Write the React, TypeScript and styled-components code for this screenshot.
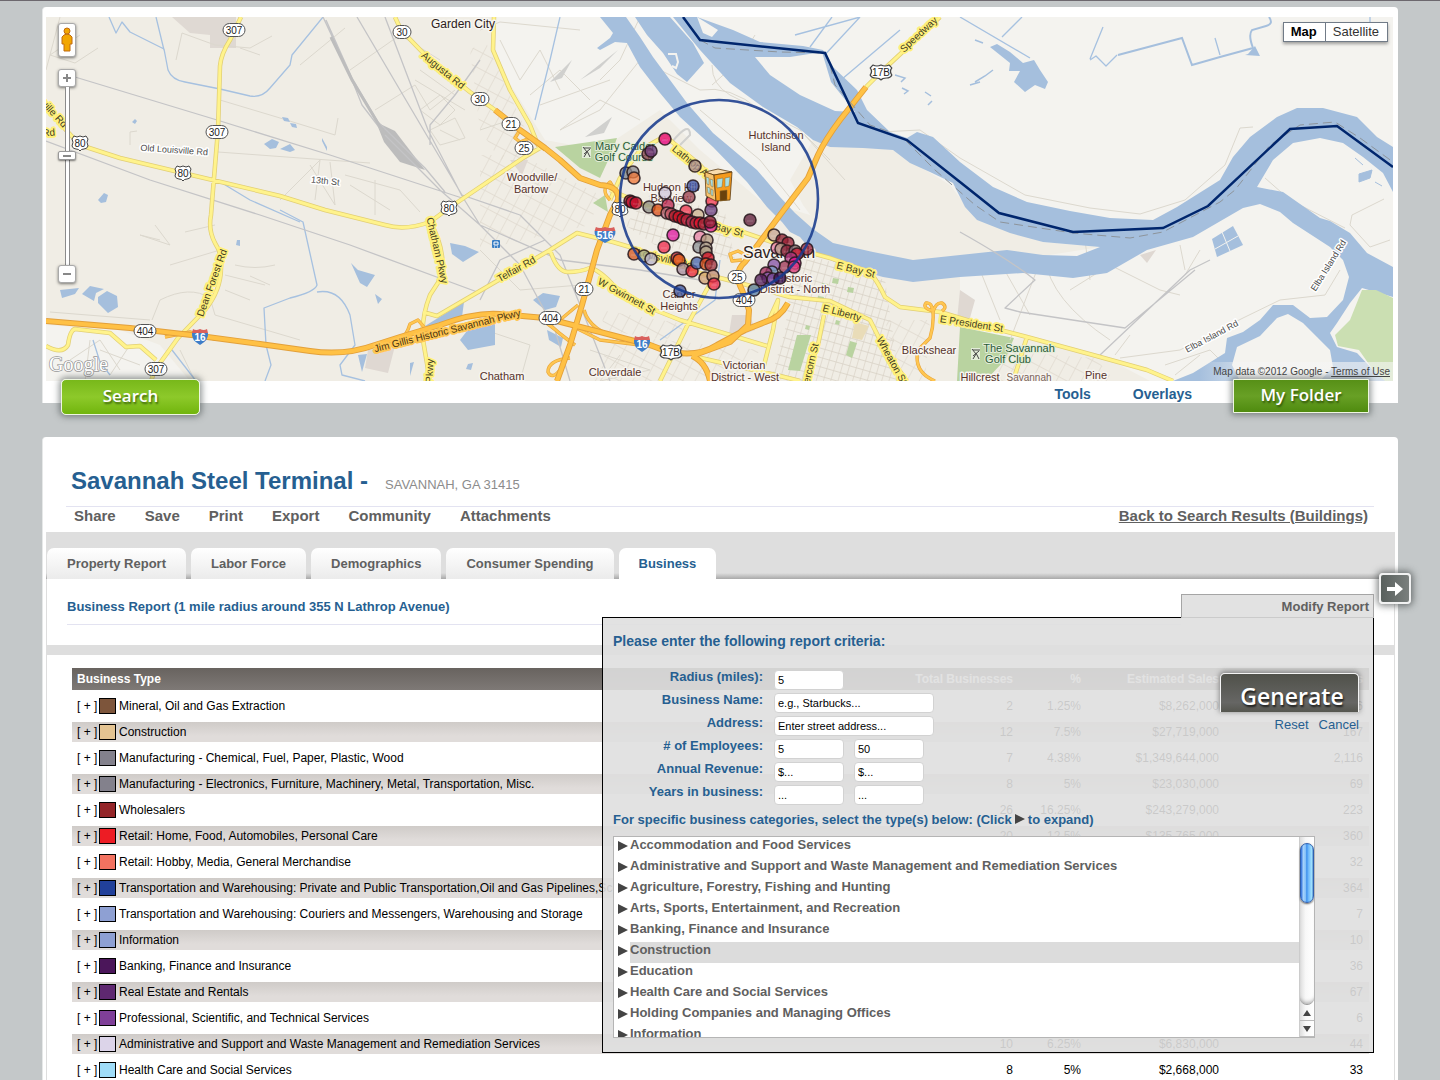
import React from "react";
import styled, { createGlobalStyle, css } from "styled-components";

const sans = `"Liberation Sans", Arial, Helvetica, sans-serif`;
const display = `"Open Sans", "Noto Sans", sans-serif`;
const blue = "#265f91";
const grey = "#606060";

const GlobalStyle = createGlobalStyle`
  * { box-sizing: border-box; }
  body { margin: 0; background: #c4c8c9; font-family: ${sans}; font-size: 12px; color: #000; }
  button, input { font-family: inherit; margin: 0; }
  a { color: inherit; text-decoration: none; }
`;

const Page = styled.div`
  min-height: 100vh;
  display: flex;
  flex-direction: column;
  gap: 34px;
  padding: 6px 42px 0;
  border-top: 1px solid #6d686e;
`;

const MapCard = styled.section`
  background: #fff;
  border-left: 1px solid #e6e8e8;
  border-radius: 4px 4px 0 0;
  padding: 10px 5px 0 3px;
`;

const MapView = styled.div`
  position: relative;
  height: 364px;
  overflow: hidden;
  background: #f0ede5;
`;

const MapSvg = styled.svg`
  display: block;
  width: 100%;
  height: 100%;
`;

const MapText = styled.text<{ $size?: number; $bold?: boolean; $serif?: boolean }>`
  font-family: ${(p) => (p.$serif ? `"Liberation Serif", "Times New Roman", serif` : sans)};
  font-size: ${(p) => p.$size || 11}px;
  font-weight: ${(p) => (p.$bold ? 700 : 400)};
  paint-order: stroke;
  stroke-linejoin: round;
`;

const Controls = styled.div`
  position: absolute;
  top: 6px;
  left: 12px;
  display: flex;
  flex-direction: column;
  align-items: center;
`;

const ControlButton = styled.button<{ $tall?: boolean }>`
  width: 18px;
  height: ${(p) => (p.$tall ? 34 : 18)}px;
  margin-bottom: ${(p) => (p.$tall ? 12 : 0)}px;
  padding: 0;
  display: flex;
  align-items: center;
  justify-content: center;
  background: #fff;
  border: 1px solid #a9a9a9;
  border-radius: 3px;
  box-shadow: 0 1px 3px rgba(0, 0, 0, 0.5);
`;

const ZoomSlider = styled.input`
  appearance: none;
  writing-mode: vertical-lr;
  direction: rtl;
  width: 18px;
  height: 178px;
  background: transparent;
  &::-webkit-slider-runnable-track {
    width: 5px;
    height: 178px;
    background: #fff;
    border: solid #8b8b8b;
    border-width: 0 1px;
  }
  &::-webkit-slider-thumb {
    appearance: none;
    width: 18px;
    height: 9px;
    margin-left: -8px;
    background: linear-gradient(#888, #888) center / 8px 2px no-repeat #fff;
    border: 1px solid #999;
    border-radius: 2px;
    box-shadow: 0 1px 2px rgba(0, 0, 0, 0.5);
  }
`;

const MapTypes = styled.div`
  position: absolute;
  top: 5px;
  right: 5px;
  display: flex;
  border: 1px solid #717b87;
  box-shadow: 0 2px 3px rgba(0, 0, 0, 0.35);
`;

const MapType = styled.button<{ $active?: boolean }>`
  height: 18px;
  padding: 0 8px 0 7px;
  border: 0;
  border-left: ${(p) => (p.$active ? "0" : "1px solid #717b87")};
  background: #fff;
  color: ${(p) => (p.$active ? "#000" : "#333")};
  font-size: 13px;
  line-height: 18px;
  font-weight: ${(p) => (p.$active ? 700 : 400)};
`;

const Attribution = styled.div`
  position: absolute;
  right: 0;
  bottom: 0;
  height: 19px;
  padding: 0 3px 0 14px;
  background: linear-gradient(to right, rgba(245, 245, 245, 0), rgba(245, 245, 245, 0.6) 50px);
  color: #444;
  font-size: 10px;
  line-height: 19px;
  a { text-decoration: underline; }
`;

const MapFooter = styled.div`
  height: 22px;
  display: flex;
  align-items: flex-start;
  padding: 0 24px 0 15px;
`;

const GreenButton = styled.button<{ $dark?: boolean }>`
  position: relative;
  flex: none;
  width: ${(p) => (p.$dark ? 136 : 139)}px;
  height: ${(p) => (p.$dark ? 34 : 36)}px;
  margin-top: -2px;
  border: 1px solid #eef7e0;
  border-radius: ${(p) => (p.$dark ? 1 : 5)}px;
  background: ${(p) =>
    p.$dark
      ? "linear-gradient(#579017, #68a025 50%, #4f8b0f)"
      : "linear-gradient(#78b81a, #8dc92a 50%, #71b50d)"};
  box-shadow: 0 0 6px 2px rgba(60, 70, 70, 0.55);
  color: #fff;
  font-family: ${display};
  font-size: 17px;
  font-weight: 600;
  line-height: 30px;
  padding: 0 0 2px;
  text-shadow: 1px 2px 2px rgba(30, 60, 0, 0.7);
`;

const FooterNav = styled.nav`
  margin-left: auto;
  display: flex;
  gap: 42px;
  margin-right: 41px;
  color: ${blue};
  font-size: 14px;
  font-weight: 700;
  line-height: 27px;
`;

const ReportCard = styled.main`
  position: relative;
  flex: 1;
  background: #fff;
  border-left: 1px solid #e6e8e8;
  border-radius: 4px 4px 0 0;
  padding: 27px 3px 0;
`;

const TitleRow = styled.header`
  display: flex;
  align-items: baseline;
  gap: 17px;
  margin: 0 21px 0 20px;
  height: 43px;
  padding-left: 5px;
  border-bottom: 1px solid #e3e3f1;
`;

const Title = styled.h1`
  margin: 0;
  color: ${blue};
  font-size: 24px;
  line-height: 34px;
`;

const City = styled.span`
  color: #8c8c8c;
  font-size: 13px;
`;

const ActionBar = styled.nav`
  display: flex;
  gap: 29px;
  height: 25px;
  padding: 0 27px 0 28px;
  color: ${grey};
  font-size: 15px;
  font-weight: 700;
  line-height: 18px;
  a:last-child { margin-left: auto; text-decoration: underline; }
`;

const Tabs = styled.div`
  display: flex;
  align-items: flex-end;
  gap: 5px;
  height: 47px;
  padding-left: 1px;
  background: linear-gradient(#dedede 41px, #a9a9a9 47px);
`;

const Tab = styled.button<{ $active?: boolean }>`
  height: 31px;
  padding: 0 20px;
  border: 0;
  border-radius: 7px 7px 0 0;
  background: ${(p) => (p.$active ? "#fff" : "linear-gradient(#fff, #ebebeb)")};
  color: ${(p) => (p.$active ? blue : grey)};
  font-size: 13px;
  font-weight: 700;
`;

const Report = styled.div`
  border: solid #dedede;
  border-width: 0 1px;
`;

const ReportHead = styled.div`
  position: relative;
  display: flex;
  justify-content: space-between;
  height: 66px;
  padding: 15px 20px 0;
`;

const ReportTitle = styled.h2`
  flex: 1;
  height: 31px;
  margin: 0;
  border-bottom: 1px solid #e3e3f1;
  color: ${blue};
  font-size: 13px;
  line-height: 25px;
`;

const ModifyTab = styled.button`
  position: relative;
  z-index: 2;
  width: 193px;
  height: 24px;
  padding: 0 4px 0 0;
  border: 1px solid #a5a5a5;
  border-bottom-color: #cbcbcb;
  background: #e2e2e2;
  color: ${grey};
  font-size: 13px;
  font-weight: 700;
  text-align: right;
`;

const Divider = styled.div`
  height: 10px;
  background: #dedede;
`;

const Table = styled.table`
  table-layout: fixed;
  width: calc(100% - 50px);
  margin: 7px 25px -6px;
  border-collapse: separate;
  border-spacing: 0 6px;
  line-height: 14px;
  white-space: nowrap;
`;

const HeadRow = styled.tr`
  height: 22px;
  background: linear-gradient(#68635f, #7e7976);
  color: #fff;
`;

const cell = css<{ $right?: boolean }>`
  padding: 0 6px 0 5px;
  text-align: ${(p) => (p.$right ? "right" : "left")};
`;
const Th = styled.th<{ $right?: boolean }>`${cell}`;
const Td = styled.td<{ $right?: boolean }>`${cell}`;
const Col = styled.col<{ $w?: number }>`
  width: ${(p) => (p.$w ? `${p.$w}px` : "auto")};
`;

const Row = styled.tr`
  height: 20px;
  &:nth-child(even) { background: linear-gradient(#cfcbc8, #e0dcda 70%); }
`;

const Category = styled.div`
  display: flex;
  align-items: center;
`;

const Expand = styled.button`
  flex: none;
  width: 22px;
  padding: 0;
  border: 0;
  background: none;
  font-size: 12px;
  line-height: 14px;
  text-align: left;
`;

const Swatch = styled.span<{ $color: string }>`
  flex: none;
  width: 17px;
  height: 16px;
  margin-right: 3px;
  border: 1px solid #000;
  background: ${(p) => p.$color};
`;

const Popup = styled.form`
  position: absolute;
  z-index: 1;
  top: 38px;
  right: 20px;
  width: 772px;
  height: 436px;
  padding: 15px 14px 0 10px;
  border: 1px solid #000;
  background: rgba(223, 223, 223, 0.9);
`;

const PopupTitle = styled.h3`
  margin: 0 0 21px;
  color: ${blue};
  font-size: 14px;
  line-height: 16px;
`;

const Criteria = styled.div`
  display: flex;
  justify-content: space-between;
`;

const Fields = styled.div`
  display: grid;
  gap: 3px;
`;

const Field = styled.div`
  display: flex;
  gap: 10px;
  height: 20px;
`;

const Label = styled.label`
  width: 150px;
  margin-right: 1px;
  color: ${blue};
  font-size: 13px;
  font-weight: 700;
  line-height: 14px;
  text-align: right;
`;

const TextBox = styled.input<{ $wide?: boolean }>`
  width: ${(p) => (p.$wide ? 160 : 70)}px;
  height: 20px;
  padding: 0 3px;
  border: 1px solid #d2d2d2;
  border-radius: 4px;
  background: #fff;
  color: #000;
  font-size: 11px;
`;

const Actions = styled.div`
  display: flex;
  flex-direction: column;
  align-items: flex-end;
  gap: 5px;
  padding-top: 3px;
  color: ${blue};
`;

const Generate = styled.button`
  width: 139px;
  height: 39px;
  padding: 5px 0 0 5px;
  border: 1px solid #f4f4f4;
  border-bottom: 0;
  border-radius: 5px 5px 0 0;
  background: linear-gradient(#50514a, #666664 75%, #55564f);
  box-shadow: 0 -1px 5px 1px rgba(60, 60, 60, 0.5);
  color: #fff;
  font-family: ${display};
  font-size: 23px;
  line-height: 28px;
  font-weight: 600;
  text-shadow: 1px 2px 2px rgba(0, 0, 0, 0.7);
`;

const ActionLinks = styled.div`
  display: flex;
  gap: 10px;
  font-size: 13px;
  line-height: 15px;
`;

const ListTitle = styled.div`
  margin: 7px 0 8px;
  color: ${blue};
  font-size: 13px;
  font-weight: 700;
  line-height: 16px;
`;

const ListBox = styled.div`
  display: flex;
  width: 702px;
  height: 202px;
  border: 1px solid #b5b5b5;
  background: #fff;
  overflow: hidden;
`;

const List = styled.ul`
  flex: 1;
  margin: 0;
  padding: 0 0 0 4px;
  list-style: none;
`;

const Item = styled.li`
  display: flex;
  height: 21px;
  color: ${grey};
  font-size: 13px;
  font-weight: 700;
  line-height: 16px;
`;

const ItemName = styled.span<{ $selected?: boolean }>`
  flex: 1;
  background: ${(p) => (p.$selected ? "#dcdcdc" : "transparent")};
`;

const Arrow = styled.svg`
  width: 12px;
  height: 12px;
  margin-top: 3px;
  fill: #444;
`;

const InlineArrow = styled.svg`
  width: 10px;
  height: 10px;
  margin: 0 3px;
  fill: #444;
`;

const Scroll = styled.div`
  display: flex;
  flex-direction: column;
  width: 15px;
  padding-top: 6px;
  border-left: 1px solid #ccc;
  background: linear-gradient(to right, #ddd, #f8f8f8 40%, #fff);
`;

const Track = styled.div`
  height: 162px;
  border-radius: 0 0 7px 7px;
  border-bottom: 1px solid #999;
  box-shadow: inset 0 -4px 4px -3px rgba(0, 0, 0, 0.35);
`;

const Thumb = styled.div`
  height: 60px;
  border: 1px solid #2f5fae;
  border-radius: 7px;
  background: linear-gradient(to right, #2b6bdc, #a5d2fb 20%, #85c0f8 38%, #3c8fec 48%, #6ab4fb 60%, #9ee0fd 88%, #5a94d2);
  box-shadow: 0 1px 2px rgba(0, 0, 0, 0.6);
`;

const Step = styled.button`
  height: 16px;
  padding: 0;
  border: 0;
  border-bottom: 1px solid #bbb;
  background: none;
  display: flex;
  align-items: center;
  justify-content: center;
`;

const NextButton = styled.button`
  position: absolute;
  top: 136px;
  right: -13px;
  width: 32px;
  height: 31px;
  padding: 0;
  display: flex;
  align-items: center;
  justify-content: center;
  border: 2px solid #f2f2f2;
  border-radius: 4px;
  background: linear-gradient(to right, #59605d, #7a7f7d);
  box-shadow: 0 0 7px 2px rgba(50, 55, 55, 0.6);
`;

/* ---------- map data ---------- */

type Label = [string, number, number, number?, number?, string?];

const places: Label[] = [
  ["Garden City", 463, 28, 0, 12, "#2c2020"],
  ["Woodville/", 532, 181], ["Bartow", 531, 193],
  ["Hutchinson", 776, 139], ["Island", 776, 151],
  ["Hudson Hill", 671, 191], ["Bayview", 671, 202],
  ["Savannah", 779, 258, 0, 16, "#2c2020"],
  ["Historic", 794, 282], ["District - North", 795, 293],
  ["Carver", 679, 298], ["Heights", 679, 310],
  ["Victorian", 744, 369], ["District - West", 745, 381],
  ["Cloverdale", 615, 376], ["Chatham", 502, 380], ["Blackshear", 929, 354],
  ["Hillcrest", 980, 381], ["Savannah", 1029, 381, 0, 10, "#7a625a"], ["Pine", 1096, 379],
];

const parks: Label[] = [
  ["Mary Calder", 625, 150], ["Golf Course", 624, 161],
  ["The Savannah", 1019, 352], ["Golf Club", 1008, 363],
];

const minor: Label[] = [
  ["Old Louisville Rd", 174, 153, 4, 9], ["13th St", 325, 184, 6, 9],
  ["Elba Island Rd", 1331, 267, -58, 9], ["Elba Island Rd", 1213, 339, -28, 9],
];

const major: Label[] = [
  ["Augusta Rd", 441, 73, 39, 10], ["Speedway", 921, 37, -43, 10],
  ["ville Rd", 52, 116, 48, 10], ["Rd", 49, 136, -5, 10],
  ["Dean Forest Rd", 215, 284, -70, 10], ["Chatham Pkwy", 434, 251, 77, 10],
  ["Pkwy", 433, 371, -88, 10], ["Telfair Rd", 518, 272, -29, 10],
  ["W Gwinnett St", 625, 299, 29, 10], ["Louisville Rd", 664, 262, 14, 10],
  ["E Bay St", 855, 273, 14, 10], ["Bay St", 728, 233, 14, 10],
  ["E Liberty", 841, 316, 15, 10], ["E President St", 971, 327, 9, 10],
  ["Wheaton St", 889, 362, 61, 10], ["ercorn St", 814, 364, -77, 10],
  ["Lathrop Av", 690, 165, 39, 10],
];

const highways: Label[] = [["Jim Gillis Historic Savannah Pkwy", 448, 334, -14, 10]];

const yellowRoads = [
  "M241 17L230 40Q221 54 220 66L218 130 213 190 211 215Q208 230 215 243 223 255 221 268 221 290 205 310L178 338 155 370 151 381",
  "M46 105L66 130 80 145 120 158 183 173 280 196 325 210 385 225Q405 231 430 222L449 208 480 187 523 158 540 148",
  "M430 222Q444 245 443 275L430 295Q421 318 423 340L430 381",
  "M423 312L437 316 550 250 577 233 613 242 640 250 700 273 740 283 790 297 830 301 870 320 885 350 907 381",
  "M550 250Q557 272 568 272 580 272 590 268 600 270 615 287L650 308 680 320 767 346",
  "M395 17L401 30 430 60 470 92 495 110",
  "M494 17L493 50 510 90 530 125 540 150",
  "M940 17L881 72 866 87",
  "M610 190L650 207 700 222 740 231 775 243 830 258 870 272Q878 282 885 297L900 307 940 312 1000 330 1027 337 1093 355 1147 370 1173 381",
  "M610 200L620 178 640 150 665 136 700 165 725 192",
  "M712 280L690 320 660 381", "M768 322L778 300 773 330 760 381",
  "M46 346Q62 355 68 345 70 330 75 329L110 333 126 347 140 346 156 360",
  "M824 315L818 345 805 381", "M1027 337L1015 375", "M692 356L780 376 800 381",
];
const orangeRoads = [
  "M46 321L130 328 200 336 260 344 310 351Q345 356 375 345L400 337 440 325Q475 312 500 314L545 318 600 332 650 345Q690 362 717 345L745 330 765 322Q780 318 788 303",
  "M557 381L570 345 582 305 597 250 610 215 618 200Q620 186 600 185L580 178 560 160 545 148 520 130 495 110",
  "M866 87L840 120Q825 140 818 155L808 178 780 215 745 262Q733 272 742 290L749 310 748 325 730 342 692 356",
  "M692 356Q706 362 710 381",
];
const thinOrange = [
  "M165 337L190 332 215 339", "M397 345Q407 335 410 324L418 320 424 327 420 338 405 341",
  "M405 341L420 341 440 331", "M545 322L575 345M560 320L600 340 640 345M578 305L560 320M584 310Q590 332 625 340M575 345Q560 335 545 320",
  "M570 358Q548 360 548 372Q552 380 560 370", "M520 130L515 138 520 142 530 138 545 150",
  "M610 200Q600 190 610 182L618 195", "M742 260L732 261 730 254 738 251 748 256",
  "M933 311Q922 308 926 303Q932 302 933 312Q934 325 930 338L918 350Q913 372 935 381M933 312Q936 302 942 303Q948 307 942 311",
];
const rails = [
  "M75 77L217 120 330 155 462 198", "M46 141L150 180 260 215 350 245 480 293",
  "M323 17L350 75 362 105 385 135 440 190 480 225 520 265 555 330 570 381", "M357 17L400 90 462 195",
  "M385 17L428 130 462 196 480 225", "M326 20L352 78 378 122 425 168 445 192",
  "M480 60L455 95 430 125 430 145", "M480 225L560 260 640 270 700 280", "M960 232Q1010 260 1035 280L1005 308 1020 312 1125 328 1195 270",
  "M1100 355L1190 270 1210 260", "M462 195L520 215 560 255 590 330 610 381", "M480 300L500 260 545 240",
];
const lanes = [
  "M60 17L46 70M80 35L50 55 75 63 98 48M176 60L182 33 215 45 250 48 272 36M240 48L260 55",
  "M220 100L280 118 335 135 338 118M218 152L300 158 370 163M130 145V132L137 131",
  "M280 200L320 160 315 200M310 165L335 205 330 162M345 175L400 190 420 212M350 185L390 210M375 180V215",
  "M350 70L400 35 440 60M375 110L415 85 430 110 455 90M300 65L345 28M420 70L455 95M430 60L470 90M415 80L465 110",
  "M420 110L440 95 455 110 440 125ZM430 130L455 118 465 138 440 145ZM440 130L460 140",
  "M160 240L140 235 170 245 155 225M185 232L215 225M170 265L220 250M235 265Q255 270 275 265M225 275L265 285",
  "M225 290L250 300M250 276L270 285M152 320L160 300Q190 285 210 298L215 315 300 340M50 312L150 320",
  "M70 360L100 340 120 370M90 340L85 381M100 350L140 365M180 350L195 381M130 345L110 375",
  "M640 17L620 60 600 80M500 40L520 80 540 50 560 90M480 30L500 22 580 30M530 95L560 70 590 100M540 105L610 80M560 130L600 100 640 120M480 130L510 120 540 150",
  "M712 85L740 60 755 35M712 65Q712 85 730 95L800 130 845 180M800 130L830 160M700 90Q730 85 760 110",
  "M850 130Q870 125 880 132L920 130 960 158 1025 195 1090 208 1140 214 1185 200 1225 165 1240 128 1253 127",
  "M640 60L700 90M700 110L760 160 800 210M640 60L600 110 560 130",
  "M1265 178L1290 200 1345 228M1384 199L1352 215 1350 225 1370 247 1390 240",
  "M980 270L1000 320M1000 262L1030 315M1040 262L1010 340M1070 290L1110 265 1160 290 1180 295M1045 258Q1050 300 1110 340M1085 240L1090 280M1180 245L1185 270M1200 250L1185 275",
  "M1120 358L1180 350 1243 318 1280 300 1325 295 1340 270M1130 335L1115 355M1165 365L1210 350 1225 365M1175 375L1200 355",
  "M480 250L520 290 580 285M485 330L530 345 520 381M590 350L650 370 600 381M620 355L600 381",
];
const creeks = [
  "M109 17L116 33 122 22 130 32 164 49 168 70Q172 80 185 82L220 89 250 96Q262 98 270 88L290 65 292 55 323 17",
  "M156 17L164 50", "M217 180L250 200 300 222M280 210L303 222 317 285Q315 292 290 298L264 308 266 345 271 365 265 381",
  "M317 292Q340 288 350 315L355 345 340 365 342 375 365 381", "M172 350L196 381", "M560 17L550 60 535 120",
  "M720 260L715 300 660 340M810 47L832 17M820 60L860 17M860 17L795 35M900 30L835 85",
  "M1090 59L1103 27M1090 60L1096 56 1106 66 1117 55M960 17L1030 58M1002 37L1022 17",
  "M1215 38L1220 55M1370 17V25", "M93 340L100 362 110 375",
];
const dots: [number, number, string][] = [
  [665, 139, "#e6007e"], [648, 154, "#8a4550"], [651, 151, "#6b3a78"], [695, 166, "#a88a90"],
  [626, 173, "#7c8592"], [633, 172, "#8d8d92"], [634, 178, "#ee7a3c"], [693, 186, "#3d55a5"],
  [689, 197, "#9e4350"], [665, 193, "#cfc6d8"], [630, 201, "#b02034"], [632, 202, "#c01030"],
  [636, 203, "#c8102e"], [649, 207, "#8f9088"], [658, 210, "#d9501e"], [668, 205, "#bb2850"],
  [686, 211, "#ee3a52"], [667, 213, "#c87a88"], [671, 214, "#c05060"], [675, 216, "#b01828"],
  [679, 217, "#d01022"], [683, 219, "#bb1020"], [687, 220, "#b52840"], [698, 215, "#cdb592"],
  [692, 222, "#a83050"], [696, 223, "#c02034"], [700, 223, "#e0102a"], [712, 201, "#ee3048"],
  [711, 210, "#6a3f80"], [704, 224, "#a02838"], [711, 226, "#e0208c"], [710, 222, "#8c1c30"],
  [673, 235, "#e01ca0"], [664, 247, "#ee3050"], [700, 237, "#e884a8"], [707, 240, "#b59b82"],
  [699, 247, "#8d9296"], [706, 248, "#b3a594"], [634, 254, "#d35a24"], [644, 256, "#a5ab8c"],
  [651, 259, "#b8b5cc"], [677, 258, "#c02630"], [679, 260, "#e4601c"], [683, 269, "#a58a9c"],
  [692, 271, "#e8283a"], [697, 263, "#4a68b0"], [706, 252, "#b0a085"], [708, 258, "#d01224"],
  [706, 264, "#dd5a20"], [711, 265, "#a03440"], [705, 278, "#d0a072"], [713, 276, "#c09078"],
  [714, 284, "#ee2c46"], [750, 220, "#60203c"], [680, 291, "#3d559c"], [774, 235, "#c9a894"],
  [782, 240, "#8c2030"], [788, 243, "#982034"], [777, 248, "#e884a8"], [781, 249, "#b59a85"],
  [787, 251, "#902840"], [795, 251, "#80707e"], [807, 249, "#98283c"], [797, 254, "#d01830"],
  [791, 258, "#b03880"], [785, 267, "#a03858"], [795, 263, "#e60a90"], [794, 267, "#d83878"],
  [774, 265, "#8655a8"], [772, 272, "#7a9cc4"], [766, 273, "#a03060"], [768, 278, "#8a5cae"],
  [761, 280, "#54205c"], [773, 279, "#7a4a9a"], [780, 278, "#351052"], [754, 290, "#587fa8"],
];
const stateShields: [string, number, number][] = [
  ["307", 234, 30], ["30", 402, 32], ["30", 480, 99], ["307", 217, 132], ["21", 511, 124], ["25", 524, 148],
  ["404", 145, 331], ["307", 156, 369], ["21", 584, 289], ["404", 550, 318], ["25", 737, 277], ["404", 744, 300],
];
const usShields: [string, number, number][] = [
  ["80", 80, 143], ["80", 183, 173], ["80", 449, 208], ["80", 620, 209], ["17B", 881, 72], ["17B", 671, 352],
];
const interstates: [string, number, number][] = [["16", 200, 337], ["516", 605, 235], ["16", 642, 344]];

function Labels({ items, halo, width, color }: { items: Label[]; halo: string; width: number; color: string }) {
  return (
    <>
      {items.map(([t, x, y, r = 0, s = 11, c]) => (
        <MapText key={t + x} $size={s} textAnchor="middle" fill={c || color} stroke={halo} strokeWidth={width}
          transform={`translate(${x} ${y}) rotate(${r})`}>{t}</MapText>
      ))}
    </>
  );
}

function Strokes({ d, color, w, dash }: { d: string[]; color: string; w: number; dash?: string }) {
  return <path d={d.join("")} fill="none" stroke={color} strokeWidth={w} strokeDasharray={dash} strokeLinejoin="round" />;
}

function MapDrawing() {
  return (
    <MapSvg viewBox="46 17 1347 364" preserveAspectRatio="xMidYMid slice" role="img" aria-label="Map of Savannah">
      <defs>
        <pattern id="grid" width="7" height="9" patternUnits="userSpaceOnUse" patternTransform="rotate(16)">
          <path d="M0 0H7M0 0V9" stroke="#d8d1c5" strokeWidth="1.3" />
        </pattern>
        <pattern id="blocks" width="11" height="15" patternUnits="userSpaceOnUse" patternTransform="rotate(28)">
          <path d="M0 0H11M0 0V15" stroke="#dfd9ce" strokeWidth="1.3" />
        </pattern>
      </defs>
      <rect x="46" y="17" width="1347" height="364" fill="#f0ede5" />
      <path d="M495 17L495 60 545 140 600 150 660 110 700 150 760 200 810 215 880 240 960 250 960 381H1393V17Z" fill="#f4f3ef" />
      <path d="M46 325L120 330 160 345 190 381H46Z" fill="#f4f3ef" />
      <path d="M813 140L893 150 950 185 977 220 1043 242 1100 247 1043 256 960 255 873 252 825 235 803 205 790 180Z" fill="#f0ede5" />
      <path d="M960 345L1020 338 1110 360 1150 381H960Z" fill="#f0ede5" />
      <path d="M652 192L725 213 735 260 655 245 625 225Z" fill="url(#grid)" />
      <path d="M795 250L885 280 900 381H770L785 330Z" fill="url(#grid)" />
      <path d="M480 155L520 155 600 195 590 225 480 250ZM600 310L690 325 665 340 605 330Z" fill="url(#blocks)" />
      <path d="M470 50L485 40 505 85 535 150 500 160 480 130ZM615 335L760 350 740 381H590ZM885 320L930 320 925 381H900ZM985 350L1095 358 1115 381H985Z" fill="url(#blocks)" />
      <path d="M172 17L190 33 210 35 210 48 236 48 236 17Z" fill="#dfd9d3" />
      <path d="M368 350L395 346 388 373 365 368ZM732 315L750 315 755 330 728 340ZM510 160H528L522 175ZM960 290L975 300 968 325 957 320ZM1140 255L1156 250 1147 263Z" fill="#dfd8d2" />
      <path d="M555 147L617 138 612 152 600 178 580 168ZM593 203L605 195 608 212ZM797 335L811 335 800 371 788 370ZM850 341L857 343 852 358 846 355ZM960 327L1014 338 1005 360 985 381H957Z" fill="#b9d3a0" />
      <path d="M822 283l6 1-1 5-6-1zM833 278l6 1-1 5-6-1zM818 296l6 1-1 5-6-1zM848 287l6 1-1 5-6-1zM806 325l4 1-1 4-4-1zM836 320l4 1-1 4-4-1z" fill="#b9d3a0" />
      <path d="M855 322L869 326 862 340 852 338Z" fill="#e9dcb8" />

      <Strokes d={lanes} color="#dcd8ce" w={1} />
      <Strokes d={creeks} color="#a6c1e0" w={1.3} />
      <g fill="#a5bfdd">
        <path d="M600 17L613 33 610 38 597 48 600 50 615 42 627 43 640 67 660 93 680 117 713 147 747 182 767 207 782 222 790 232 800 237 813 253 847 267 883 277 913 282 960 277 1023 273 1073 278 1107 273 1147 250 1193 237 1243 208 1260 204 1280 212 1293 223 1330 247 1343 260 1349 277 1343 300 1327 317 1310 318 1293 305 1273 305 1260 320 1243 332 1227 338 1225 353 1193 373 1173 381H1240L1232 365 1237 347 1260 336 1277 318 1288 314 1303 323 1317 337 1330 350 1333 367 1320 381H1393V372L1373 370 1357 353 1337 347 1330 333 1337 323 1350 303 1362 288 1393 297V267L1367 253 1350 233 1330 221 1320 218 1283 192 1257 187 1273 160 1293 143 1320 138 1343 143 1363 157 1383 173 1393 192V147L1377 137 1357 117 1323 108 1297 108 1277 117 1250 137 1233 157 1220 180 1177 207 1153 220 1110 218 1070 211 1027 202 993 187 960 162 933 137 917 132 907 138 890 132 867 110 857 90 833 67 823 50 803 46 760 42 733 30 697 17H673L700 50 730 83 763 107 797 127 813 140 830 147 863 148 893 150 910 163 930 172 953 183 965 207 977 220 1010 233 1043 242 1100 247 1077 256 1043 255 1007 250 960 255 913 260 873 252 833 243 813 229 795 213 780 197 757 170 713 133 687 103 670 80 653 57 640 37 626 17Z" />
        <path d="M635 17H670L693 43 704 63 687 82 677 74 663 53 647 35Z" />
        <path d="M990 47L997 44 1010 52 1023 63 1034 60 1040 70 1048 82 1045 89 1035 85 1025 92 1014 82 1020 71 1009 71 1010 63Z" />
        <path d="M1212 239L1233 226 1243 245 1217 257Z" />
        <path d="M1248 54L1255 46 1260 56 1245 55ZM264 144L272 139 279 142 276 148 270 149ZM280 149L290 144 295 150 290 152ZM282 117L288 118 290 122 284 121ZM290 123l6 1 1 4-5-1zM322 138L327 147 327 151 322 141ZM98 200L104 193 108 195 106 202 101 203ZM132 122l3-3 2 2-2 3zM237 240l3 0 0 6-4-1z" />
        <path d="M60 290L79 288 75 294 62 298ZM82 294L90 286 104 289 96 293 94 301ZM98 297L107 291 117 296 118 307 108 313 98 303ZM351 263L358 270 375 275 367 287 360 283ZM375 294L382 299 378 304ZM450 243L465 246 479 252 463 262 452 254ZM425 326L464 302 462 317 445 326ZM470 327L495 322 495 345 468 350 460 340ZM358 355L367 354 362 372ZM533 300L543 293 560 296 556 307 545 310ZM547 330L563 338 561 347 549 340ZM410 363l4-1-4 14zM468 364l5-1-2 7-5-1z" />
      </g>
      <path d="M697 17L718 30 712 37 703 33ZM755 57L790 57 822 52 831 82 855 112 835 111 800 95 770 75Z" fill="#f4f3ef" />
      <path d="M1362 290L1376 290 1393 298V381H1385L1373 370 1359 350 1338 346 1335 335 1350 320Z" fill="#cbdfb2" />
      <path d="M668 54l8 0 2 8-2 6-4-2" fill="none" stroke="#f4f3ef" strokeWidth="2" />
      <path d="M1215 249L1238 236M1222 232L1230 251" stroke="#f4f3ef" />
      <path d="M1355 158L1363 165M1359 174L1372 170 1370 178 1359 182ZM1375 182l7 4" fill="#a5bfdd" stroke="#a5bfdd" />
      <path d="M1269 17Q1274 24 1266 26L1252 30Q1248 35 1253 48L1220 57 1192 65 1182 38 1118 55" stroke="#a5bfdd" strokeWidth="2" fill="none" />
      <path d="M895 75l10 3-4 4M902 88l6 3-4 3M925 92l6 4M975 82l10-6 8-6M970 85l10-3M928 105l4-4M975 40l8 3" stroke="#a5bfdd" strokeWidth="1.5" fill="none" />

      <path d="M376 122L395 131 425 170 400 162 384 142Z" fill="#bcbcbc" />
      <path d="M580 80L618 50 600 68ZM550 82L572 60 562 78ZM585 137L612 117 604 133Z" fill="#d0d0ce" />
      <path d="M672 142Q690 120 690 135L680 145" fill="none" stroke="#d0d0ce" strokeWidth="2" />
      <Strokes d={rails} color="#c4c4c6" w={1.3} />
      <path d="M331 37L352 80 385 135" stroke="#bdbdbd" strokeWidth="3" fill="none" />

      <Strokes d={yellowRoads} color="#e2cf74" w={4.5} />
      <Strokes d={yellowRoads} color="#fff38c" w={3} />
      <Strokes d={thinOrange} color="#e8a63a" w={3.4} />
      <Strokes d={thinOrange} color="#ffc651" w={2.2} />
      <Strokes d={orangeRoads} color="#e3a03a" w={6} />
      <Strokes d={orangeRoads} color="#ffc145" w={4.2} />

      <Strokes d={["M700 40L715 48 780 52 825 53M830 65L835 85 870 125 890 132M905 140L935 170 975 205 1000 222 1073 233 1130 238 1163 232 1220 202 1235 190 1270 145 1300 125 1335 122 1360 138 1393 162"]} color="#8d949b" w={1} dash="9 5" />

      <Labels items={major} halo="#fff07a" width={4} color="#443d1f" />
      <Labels items={highways} halo="#ffc651" width={4} color="#4a3410" />
      <Labels items={minor} halo="#fff" width={3} color="#4c4c4c" />
      <Labels items={places} halo="#f7f5f0" width={3} color="#56322a" />
      <Labels items={parks} halo="#e3edd8" width={2} color="#2b5b37" />

      {[[587, 152], [976, 354]].map(([x, y]) => (
        <g key={x} transform={`translate(${x} ${y})`}>
          <rect x="-5" y="-6" width="9" height="12" fill="#fff" opacity=".6" />
          <path d="M-4-5L0 0-3 5M0-1L3 5M-3-4H4M-3 2L3-3" stroke="#444" fill="none" />
        </g>
      ))}
      <g transform="translate(496 244)">
        <rect x="-4" y="-4" width="8" height="8" rx="1" fill="#3b7fc4" />
        <path d="M-2-2h4v3h-4zM-2 3h1M1 3h1" stroke="#fff" fill="none" />
      </g>
      {stateShields.map(([t, x, y]) => (
        <g key={t + x} transform={`translate(${x} ${y})`}>
          <rect x={t.length > 2 ? -11 : -9} y="-6.5" width={t.length > 2 ? 22 : 18} height="13" rx="6.5" fill="#fff" stroke="#555" />
          <MapText $size={10} textAnchor="middle" y="3.5" fill="#222">{t}</MapText>
        </g>
      ))}
      {usShields.map(([t, x, y]) => (
        <g key={t + x} transform={`translate(${x} ${y})`}>
          <path transform={t.length > 2 ? "scale(1.35 1)" : undefined} d="M-6-7Q-3-5 0-7 3-5 6-7L8-4Q6-1 8 3 7 6 4 6 1 6 0 8-1 6-4 6-7 6-8 3-6-1-8-4Z" fill="#fff" stroke="#444" strokeLinejoin="round" />
          <MapText $size={10} textAnchor="middle" y="3.5" fill="#222">{t}</MapText>
        </g>
      ))}
      {interstates.map(([t, x, y]) => (
        <g key={t + x} transform={`translate(${x} ${y}) scale(${t.length > 2 ? 1.3 : 1} 1)`}>
          <path d="M-8-4H8Q9 3 0 8-9 3-8-4Z" fill="#3e7dc8" />
          <path d="M-7-8Q-4-6 0-8 4-6 7-8L8-4H-8Z" fill="#d9605c" />
        </g>
      ))}
      {interstates.map(([t, x, y]) => (
        <MapText key={t + x} $size={10} $bold textAnchor="middle" x={x} y={y + 4} fill="#fff">{t}</MapText>
      ))}

      <path d="M683 17L700 40 825 53 858 123 907 140 960 182 999 213 1073 232 1163 228 1208 206 1290 129 1337 126 1393 167" fill="none" stroke="#00266d" strokeWidth="2.5" />
      {dots.map(([x, y, c], i) => (
        <g key={i}>
          <circle cx={x} cy={y} r="6" fill={c} fillOpacity=".78" stroke="#26181c" strokeOpacity=".85" strokeWidth="1.6" />
          <path d={`M${x - 3} ${y + 1}h6`} stroke="#fff" strokeOpacity=".2" />
        </g>
      ))}
      <circle cx="719" cy="199" r="99" fill="none" stroke="#17398c" strokeOpacity=".87" strokeWidth="2.6" />
      <g stroke="#5b3a10" strokeWidth=".8" strokeLinejoin="round">
        <path d="M705 172L718 169 732 172 714 175Z" fill="#f8dcae" />
        <path d="M705 172L714 175 716 201 706 196Z" fill="#f6c470" />
        <path d="M714 175L732 172 730 200 716 201Z" fill="#f59a1c" />
        <g stroke="#8a6a30" strokeWidth=".5">
          <path d="M717 179l6-1-1 9-5 1zM725 178l5-1-1 9-4 1zM706 177l3 1 0 7-2-1zM710 179l3 1 0 7-2-1zM707 187l3 1v6l-2-1zM711 189l2 1v6l-2-1z" fill="#a9dfe3" />
          <path d="M720 191l7-1v10l-7 1z" fill="#6b420c" />
        </g>
      </g>
      <MapText $serif $size={20} x="49" y="371" fill="#fff" stroke="#999" strokeWidth="1.5">Google</MapText>
    </MapSvg>
  );
}

/* ---------- report data ---------- */

const rows: [string, string, string, string, string, string][] = [
  ["#7d553b", "Mineral, Oil and Gas Extraction", "2", "1.25%", "$8,262,000", "6"],
  ["#e4c492", "Construction", "12", "7.5%", "$27,719,000", "167"],
  ["#83818c", "Manufacturing - Chemical, Fuel, Paper, Plastic, Wood", "7", "4.38%", "$1,349,644,000", "2,116"],
  ["#83818c", "Manufacturing - Electronics, Furniture, Machinery, Metal, Transportation, Misc.", "8", "5%", "$23,030,000", "69"],
  ["#942529", "Wholesalers", "26", "16.25%", "$243,279,000", "223"],
  ["#ed1c24", "Retail: Home, Food, Automobiles, Personal Care", "20", "12.5%", "$135,765,000", "360"],
  ["#f37260", "Retail: Hobby, Media, General Merchandise", "3", "1.88%", "$4,120,000", "32"],
  ["#21409a", "Transportation and Warehousing: Private and Public Transportation,Oil and Gas Pipelines,Scenic", "14", "8.75%", "$61,402,000", "364"],
  ["#8ea0d3", "Transportation and Warehousing: Couriers and Messengers, Warehousing and Storage", "2", "1.25%", "$1,034,000", "7"],
  ["#8ea0d3", "Information", "2", "1.25%", "$1,518,000", "10"],
  ["#4b165a", "Banking, Finance and Insurance", "6", "3.75%", "$9,277,000", "36"],
  ["#5e2870", "Real Estate and Rentals", "9", "5.63%", "$12,846,000", "67"],
  ["#7f3f98", "Professional, Scientific, and Technical Services", "3", "1.88%", "$952,000", "6"],
  ["#dcd4e9", "Administrative and Support and Waste Management and Remediation Services", "10", "6.25%", "$6,830,000", "44"],
  ["#9fdcf8", "Health Care and Social Services", "8", "5%", "$2,668,000", "33"],
];

const categories = [
  "Accommodation and Food Services",
  "Administrative and Support and Waste Management and Remediation Services",
  "Agriculture, Forestry, Fishing and Hunting",
  "Arts, Sports, Entertainment, and Recreation",
  "Banking, Finance and Insurance",
  "Construction",
  "Education",
  "Health Care and Social Services",
  "Holding Companies and Managing Offices",
  "Information",
];

const fields: { id: string; label: string; values: string[]; wide?: boolean }[] = [
  { id: "radius", label: "Radius (miles):", values: ["5"] },
  { id: "name", label: "Business Name:", values: ["e.g., Starbucks..."], wide: true },
  { id: "address", label: "Address:", values: ["Enter street address..."], wide: true },
  { id: "employees", label: "# of Employees:", values: ["5", "50"] },
  { id: "revenue", label: "Annual Revenue:", values: ["$...", "$..."] },
  { id: "years", label: "Years in business:", values: ["...", "..."] },
];

function CriteriaPopup() {
  return (
    <Popup onSubmit={(e) => e.preventDefault()}>
      <PopupTitle>Please enter the following report criteria:</PopupTitle>
      <Criteria>
        <Fields>
          {fields.map((f) => (
            <Field key={f.id}>
              <Label htmlFor={`${f.id}-0`}>{f.label}</Label>
              {f.values.map((v, i) => (
                <TextBox key={i} id={`${f.id}-${i}`} $wide={f.wide} defaultValue={v} aria-label={i ? `${f.label} maximum` : undefined} />
              ))}
            </Field>
          ))}
        </Fields>
        <Actions>
          <Generate type="submit">Generate</Generate>
          <ActionLinks><a href="#reset">Reset</a><a href="#cancel">Cancel</a></ActionLinks>
        </Actions>
      </Criteria>
      <ListTitle>
        For specific business categories, select the type(s) below: (Click
        <InlineArrow viewBox="0 0 10 10"><path d="M0 0L10 5 0 10Z" /></InlineArrow>
        to expand)
      </ListTitle>
      <ListBox>
        <List>
          {categories.map((c) => (
            <Item key={c}>
              <Arrow viewBox="0 0 12 12"><path d="M0 1L10 6 0 11Z" /></Arrow>
              <ItemName $selected={c === "Construction"}>{c}</ItemName>
            </Item>
          ))}
        </List>
        <Scroll>
          <Track><Thumb /></Track>
          <Step type="button" aria-label="Scroll up"><svg width="8" height="6"><path d="M4 0L8 6H0Z" fill="#444" /></svg></Step>
          <Step type="button" aria-label="Scroll down"><svg width="8" height="6"><path d="M4 6L8 0H0Z" fill="#444" /></svg></Step>
        </Scroll>
      </ListBox>
    </Popup>
  );
}

export default function App() {
  return (
    <>
      <GlobalStyle />
      <Page>
        <MapCard>
          <MapView>
            <MapDrawing />
            <Controls>
              <ControlButton $tall aria-label="Street view">
                <svg width="12" height="26" viewBox="0 0 12 26" fill="#f2a600" stroke="#c06a10">
                  <path d="M3 8Q6 6 9 8L11 10V17H9V24H3V17H1V10Z" />
                  <circle cx="6" cy="4" r="3" />
                </svg>
              </ControlButton>
              <ControlButton aria-label="Zoom in">
                <svg width="10" height="10"><path d="M5 1V9M1 5H9" stroke="#888" strokeWidth="2" /></svg>
              </ControlButton>
              <ZoomSlider type="range" aria-label="Zoom level" min={0} max={100} defaultValue={62} />
              <ControlButton aria-label="Zoom out">
                <svg width="10" height="10"><path d="M1 5H9" stroke="#888" strokeWidth="2" /></svg>
              </ControlButton>
            </Controls>
            <MapTypes>
              <MapType $active>Map</MapType>
              <MapType>Satellite</MapType>
            </MapTypes>
            <Attribution>Map data ©2012 Google - <a href="#terms">Terms of Use</a></Attribution>
          </MapView>
          <MapFooter>
            <GreenButton>Search</GreenButton>
            <FooterNav><a href="#tools">Tools</a><a href="#overlays">Overlays</a></FooterNav>
            <GreenButton $dark>My Folder</GreenButton>
          </MapFooter>
        </MapCard>

        <ReportCard>
          <TitleRow>
            <Title>Savannah Steel Terminal -</Title>
            <City>SAVANNAH, GA 31415</City>
          </TitleRow>
          <ActionBar>
            {["Share", "Save", "Print", "Export", "Community", "Attachments"].map((a) => (
              <a key={a} href={`#${a.toLowerCase()}`}>{a}</a>
            ))}
            <a href="#results">Back to Search Results (Buildings)</a>
          </ActionBar>
          <Tabs>
            {["Property Report", "Labor Force", "Demographics", "Consumer Spending", "Business"].map((t) => (
              <Tab key={t} $active={t === "Business"}>{t}</Tab>
            ))}
          </Tabs>
          <Report>
            <ReportHead>
              <ReportTitle>Business Report (1 mile radius around 355 N Lathrop Avenue)</ReportTitle>
              <ModifyTab>Modify Report</ModifyTab>
              <CriteriaPopup />
            </ReportHead>
            <Divider />
            <Table>
              <colgroup><Col /><Col $w={120} /><Col $w={68} /><Col $w={138} /><Col $w={144} /></colgroup>
              <thead>
                <HeadRow>
                  <Th>Business Type</Th>
                  <Th $right>Total Businesses</Th>
                  <Th $right>%</Th>
                  <Th $right>Estimated Sales</Th>
                  <Th $right>Employees</Th>
                </HeadRow>
              </thead>
              <tbody>
                {rows.map(([color, name, ...values]) => (
                  <Row key={name}>
                    <Td>
                      <Category><Expand>[ + ]</Expand><Swatch $color={color} />{name}</Category>
                    </Td>
                    {values.map((v, i) => <Td key={i} $right>{v}</Td>)}
                  </Row>
                ))}
              </tbody>
            </Table>
          </Report>
          <NextButton aria-label="Next">
            <svg width="16" height="14"><path d="M0 5H8V0L16 7 8 14V9H0Z" fill="#fff" /></svg>
          </NextButton>
        </ReportCard>
      </Page>
    </>
  );
}
